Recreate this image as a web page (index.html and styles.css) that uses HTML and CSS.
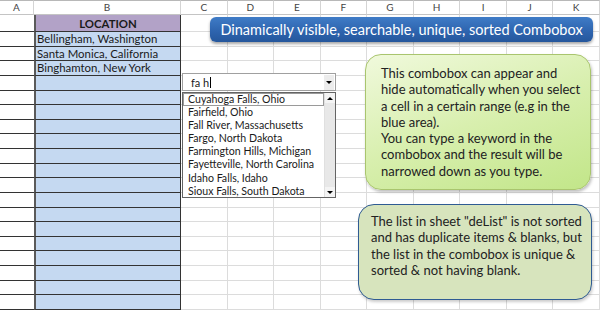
FILE: index.html
```html
<!DOCTYPE html>
<html lang="en">

<head>
    <meta charset="UTF-8">
    <title>Combobox demo</title>
    <link rel="stylesheet" href="styles.css">
</head>

<body>
    <div class="sheet">
        <!-- 表格网格，由脚本生成 -->
        <div class="grid" id="grid"></div>

        <!-- 标题 -->
        <div class="title">Dinamically visible, searchable, unique, sorted Combobox</div>

        <!-- 说明框 -->
        <div class="note note-green">
            This combobox can appear and<br>
            hide automatically when you select<br>
            a cell in a certain range (e.g in the<br>
            blue area).<br>
            You can type a keyword in the<br>
            combobox and the result will be<br>
            narrowed down as you type.
        </div>
        <div class="note note-blue">
            The list in sheet "deList" is not sorted<br>
            and has duplicate items &amp; blanks, but<br>
            the list in the combobox is unique &amp;<br>
            sorted &amp; not having blank.
        </div>

        <!-- 下拉框 -->
        <div class="combo">
            <span class="combo-text">fa h<span class="caret"></span></span>
            <span class="combo-btn"><span class="arrow-down"></span></span>
        </div>
        <div class="combo-list">
            <ul class="items" id="items"></ul>
            <div class="scrollbar">
                <span class="sb-btn"><span class="arrow-up"></span></span>
                <span class="sb-track"></span>
                <span class="sb-btn"><span class="arrow-down"></span></span>
            </div>
        </div>
    </div>

    <script>
        const cols = ['A', 'B', 'C', 'D', 'E', 'F', 'G', 'H', 'I', 'J', 'K'];
        const values = { 1: 'LOCATION', 2: 'Bellingham, Washington', 3: 'Santa Monica, California', 4: 'Binghamton, New York' };
        const rowCount = 20;
        const grid = document.getElementById('grid');

        // 列标题
        cols.forEach(c => {
            const div = document.createElement('div');
            div.className = 'cell head';
            div.textContent = c;
            grid.appendChild(div);
        });

        // 单元格
        for (let r = 1; r <= rowCount; r++) {
            cols.forEach(c => {
                const div = document.createElement('div');
                div.className = 'cell';
                if (c === 'A') div.classList.add('col-a');
                if (c === 'B') {
                    div.classList.add(r === 1 ? 'col-b-head' : 'col-b');
                    if (values[r]) div.textContent = values[r];
                }
                grid.appendChild(div);
            });
        }

        // 下拉列表项
        const items = [
            'Cuyahoga Falls, Ohio', 'Fairfield, Ohio', 'Fall River, Massachusetts',
            'Fargo, North Dakota', 'Farmington Hills, Michigan', 'Fayetteville, North Carolina',
            'Idaho Falls, Idaho', 'Sioux Falls, South Dakota'
        ];
        const list = document.getElementById('items');
        items.forEach((text, i) => {
            const li = document.createElement('li');
            li.textContent = text;
            if (i === 0) li.className = 'focus';
            list.appendChild(li);
        });
    </script>
</body>

</html>
```

FILE: styles.css
```css
/* 全局样式 */
body {
    margin: 0;
    padding: 0;
    background-color: #fff;
    font-family: Lato, "Liberation Sans", sans-serif;
    color: #1a1a1a;
    overflow: hidden;
}

.sheet {
    position: relative;
    width: 600px;
    height: 311px;
}

/* 表格网格 */
.grid {
    display: grid;
    grid-template-columns: 34px 147px repeat(9, 46.56px);
    grid-template-rows: 15px 17px repeat(19, 14.63px);
}

.cell {
    box-sizing: border-box;
    border-right: 1px solid #dcdcdc;
    border-bottom: 1px solid #dcdcdc;
    font-size: 11.4px;
    line-height: 13px;
    white-space: nowrap;
    overflow: hidden;
}

.cell.head {
    border-top: 1px solid #b8b8b8;
    border-bottom: 1px solid #c4c4c4;
    border-right: 1px solid #d4d4d4;
    color: #444;
    font-size: 10px;
    line-height: 13px;
    text-align: center;
}

.col-a {
    border-right: none;
    border-bottom: 1px solid #333;
}

.col-b-head {
    background-color: #b2a2c7;
    border-left: 2px solid #5a5a5a;
    border-right: 1px solid #333;
    border-bottom: 1px solid #333;
    font-weight: bold;
    text-align: center;
    line-height: 17px;
}

.col-b {
    background-color: #c5d9f1;
    border-left: 2px solid #5a5a5a;
    border-right: 1px solid #333;
    border-bottom: 1px solid #333;
    padding-left: 1px;
}

/* 标题 */
.title {
    position: absolute;
    left: 210px;
    top: 17px;
    width: 383px;
    height: 25px;
    box-sizing: border-box;
    border-radius: 6px;
    background: linear-gradient(#3f7cc7, #2d63ad 60%, #25579c);
    box-shadow: 0 2px 3px rgba(0, 0, 0, 0.35);
    color: #fff;
    font-size: 14.5px;
    line-height: 25px;
    text-align: center;
    white-space: nowrap;
}

/* 说明框 */
.note {
    position: absolute;
    box-sizing: border-box;
    border-radius: 16px;
    font-size: 13px;
    line-height: 16.3px;
    color: #222;
    white-space: nowrap;
}

.note-green {
    left: 365px;
    top: 54px;
    width: 226px;
    height: 136px;
    padding: 10px 0 0 15px;
    border: 1px solid #a9c56e;
    background: linear-gradient(160deg, #f0f9dc, #d8efae 50%, #c2e689);
    box-shadow: 1px 2px 3px rgba(0, 0, 0, 0.25);
}

.note-blue {
    left: 358px;
    top: 204px;
    width: 234px;
    height: 96px;
    padding: 8px 0 0 12px;
    border: 1.5px solid #2f5b93;
    background-color: #d7e4bd;
    box-shadow: 1px 2px 3px rgba(0, 0, 0, 0.2);
}

/* 下拉框 */
.combo {
    position: absolute;
    left: 182px;
    top: 73px;
    width: 154px;
    height: 18px;
    box-sizing: border-box;
    border: 1px solid #a0a0a0;
    background-color: #fff;
    display: flex;
    align-items: center;
    justify-content: space-between;
}

.combo-text {
    padding-left: 8px;
    font-size: 11px;
    display: flex;
    align-items: center;
}

.caret {
    display: inline-block;
    width: 1px;
    height: 11px;
    margin-left: 1px;
    background-color: #000;
}

.combo-btn {
    width: 10px;
    height: 15px;
    margin-right: 1px;
    background-color: #ececec;
    display: flex;
    align-items: center;
    justify-content: center;
}

.arrow-down,
.arrow-up {
    width: 0;
    height: 0;
    border-left: 3px solid transparent;
    border-right: 3px solid transparent;
}

.arrow-down {
    border-top: 3px solid #000;
}

.arrow-up {
    border-bottom: 3px solid #000;
}

.combo-list {
    position: absolute;
    left: 182px;
    top: 92px;
    width: 154px;
    height: 106px;
    box-sizing: border-box;
    border: 1px solid #646464;
    background-color: #fff;
    display: flex;
    overflow: hidden;
}

.items {
    list-style: none;
    margin: 0;
    padding: 0;
    flex: 1;
}

.items li {
    box-sizing: border-box;
    height: 13.1px;
    padding-left: 4px;
    font-size: 10.6px;
    line-height: 11px;
    white-space: nowrap;
    border: 1px solid transparent;
}

.items li.focus {
    border-color: #9a9a9a;
}

.scrollbar {
    width: 10px;
    display: flex;
    flex-direction: column;
    background-color: #f0f0f0;
    border-left: 1px solid #e0e0e0;
}

.sb-btn {
    height: 10px;
    display: flex;
    align-items: center;
    justify-content: center;
    background-color: #f4f4f4;
}

.sb-track {
    flex: 1;
    background-color: #e8e8e8;
}
```
